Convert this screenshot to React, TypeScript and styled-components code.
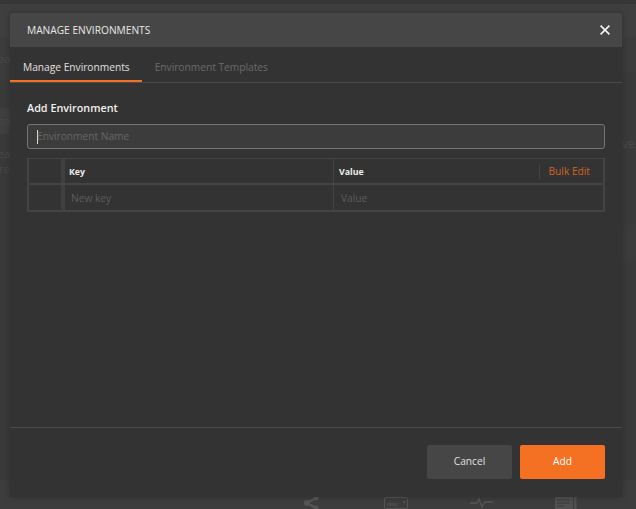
import { createGlobalStyle } from "styled-components"
import styled from "styled-components"

const GlobalStyle = createGlobalStyle`
    html, body {
        margin: 0;
        padding: 0;
        height: 100%;
        background: #3a3a3a;
    }
    * {
        box-sizing: border-box;
    }
    #root {
        height: 100%;
    }
`

const rowsLeft = [
    { lines: ["ea"], height: 44, tone: "#3c3c3c", top: 14 },
    { lines: [], height: 27, tone: "#3a3a3a", top: 0 },
    { lines: ["pa"], height: 26, tone: "#3f3f3f", top: 5 },
    { lines: ["ea", "re"], height: 50, tone: "#3a3a3a", top: 12 },
]

export default function App() {
    return <Page>
        <GlobalStyle />
        <Backdrop>
            <TopStrip />
            <SecondStrip />
            <Middle>
                <SideColumn>
                    {rowsLeft.map((row, i) => (
                        <SideRow key={i} $height={row.height} $tone={row.tone} $top={row.top}>
                            {row.lines.map(line => <div key={line}>{line}</div>)}
                        </SideRow>
                    ))}
                </SideColumn>
                <SideColumnRight>
                    <RightBand />
                    <RightText>ve</RightText>
                    <RightBandLow />
                </SideColumnRight>
            </Middle>
            <BottomBar>
                <ShareIcon />
                <KeyboardIcon />
                <PulseIcon />
                <DocIcon />
            </BottomBar>
        </Backdrop>

        <Modal>
            <ModalHeader>
                <ModalTitle>MANAGE ENVIRONMENTS</ModalTitle>
                <CloseButton aria-label="close">
                    <svg width="10" height="10" viewBox="0 0 10 10">
                        <path d="M0.6 0.6 L9.4 9.4 M9.4 0.6 L0.6 9.4" stroke="#f4f4f4" strokeWidth="1.6" fill="none" />
                    </svg>
                </CloseButton>
            </ModalHeader>

            <Tabs>
                <Tab $active>Manage Environments</Tab>
                <Tab>Environment Templates</Tab>
            </Tabs>

            <ModalBody>
                <SectionTitle>Add Environment</SectionTitle>
                <NameField>
                    <Caret />
                    <span>Environment Name</span>
                </NameField>
                <Table>
                    <HeadRow>
                        <CheckCell />
                        <Grip />
                        <KeyCell><HeadLabel>Key</HeadLabel></KeyCell>
                        <ValueCell>
                            <HeadLabel>Value</HeadLabel>
                            <BulkEdit>Bulk Edit</BulkEdit>
                        </ValueCell>
                    </HeadRow>
                    <BodyRow>
                        <CheckCell />
                        <Grip />
                        <KeyCell><Placeholder>New key</Placeholder></KeyCell>
                        <ValueCell><Placeholder>Value</Placeholder></ValueCell>
                    </BodyRow>
                </Table>
            </ModalBody>

            <ModalFooter>
                <CancelButton>Cancel</CancelButton>
                <AddButton>Add</AddButton>
            </ModalFooter>
        </Modal>
    </Page>
}

function ShareIcon() {
    return <svg width="19" height="12" viewBox="0 0 19 12">
        <path d="M13 1 L4 6 L13 11" stroke="#555555" strokeWidth="2.4" fill="none" />
        <circle cx="4" cy="6" r="3" fill="#555555" />
        <circle cx="13" cy="1" r="2.6" fill="#555555" />
        <circle cx="13" cy="11" r="2.6" fill="#555555" />
    </svg>
}

function KeyboardIcon() {
    return <svg width="24" height="12" viewBox="0 0 24 12">
        <rect x="0.5" y="0.5" width="23" height="11" rx="1.5" stroke="#555555" fill="none" />
        <path d="M4 6 V9 M6 6 V9 M8 6 V9 M10 6 V9 M12 6 V9" stroke="#555555" />
        <rect x="19" y="4" width="2" height="2" fill="#555555" />
    </svg>
}

function PulseIcon() {
    return <svg width="23" height="12" viewBox="0 0 23 12">
        <path d="M0 6 H7 L9 2 L12 10 L15 5 H23" stroke="#555555" strokeWidth="1.4" fill="none" />
    </svg>
}

function DocIcon() {
    return <svg width="22" height="12" viewBox="0 0 22 12">
        <rect x="0" y="0" width="18" height="12" fill="#505050" />
        <path d="M2 3 H15 M2 6 H15 M2 9 H9" stroke="#3a3a3a" />
        <rect x="19" y="0" width="2.5" height="12" fill="#505050" />
    </svg>
}

const Page = styled.div`
    position: relative;
    width: 636px;
    height: 509px;
    overflow: hidden;
    font-family: "Open Sans", "Noto Sans", sans-serif;
    background: #3a3a3a;
`

const Backdrop = styled.div`
    height: 100%;
    display: flex;
    flex-direction: column;
`

const TopStrip = styled.div`
    height: 4px;
    background: #363636;
`

const SecondStrip = styled.div`
    height: 33px;
    background: #3f3f3f;
`

const Middle = styled.div`
    flex: 1;
    display: flex;
    justify-content: space-between;
`

const SideColumn = styled.div`
    width: 10px;
    overflow: hidden;
`

const SideRow = styled.div<{ $height: number; $tone: string; $top: number }>`
    height: ${p => p.$height}px;
    padding-top: ${p => p.$top}px;
    background: ${p => p.$tone};
    color: #484848;
    font-size: 11px;
    line-height: 15px;
    white-space: nowrap;
    direction: rtl;
`

const SideColumnRight = styled.div`
    width: 14px;
    display: flex;
    flex-direction: column;
    color: #484848;
    font-size: 12px;
`

const RightBand = styled.div`
    height: 35px;
    background: #3c3c3c;
`

const RightText = styled.div`
    margin-top: 64px;
    height: 16px;
    line-height: 16px;
    overflow: hidden;
`

const RightBandLow = styled.div`
    margin-top: 73px;
    height: 35px;
    background: #3c3c3c;
`

const BottomBar = styled.div`
    height: 29px;
    background: #3d3d3d;
    display: flex;
    padding: 17px 0 0 303px;
    gap: 62px;
    overflow: hidden;
`

const Modal = styled.div`
    position: absolute;
    left: 10px;
    top: 13px;
    width: 612px;
    height: 484px;
    display: flex;
    flex-direction: column;
    background: #333333;
    border-radius: 2px;
    box-shadow: 0 0 6px rgba(0, 0, 0, 0.25);
`

const ModalHeader = styled.div`
    height: 34px;
    flex: none;
    display: flex;
    align-items: center;
    justify-content: space-between;
    padding: 0 12px 0 17px;
    background: #464646;
    border-radius: 2px 2px 0 0;
`

const ModalTitle = styled.div`
    color: #e8e8e8;
    font-size: 10.2px;
`

const CloseButton = styled.button`
    border: 0;
    padding: 0;
    background: none;
    display: flex;
`

const Tabs = styled.div`
    height: 36px;
    flex: none;
    display: flex;
    border-bottom: 1px solid #4a4a4a;
`

const Tab = styled.div<{ $active?: boolean }>`
    padding: 0 12px 0 13px;
    height: 35px;
    line-height: 40px;
    font-size: 10.2px;
    white-space: nowrap;
    color: ${p => p.$active ? "#e0e0e0" : "#6b6b6b"};
    border-bottom: 2px solid ${p => p.$active ? "#f47023" : "transparent"};
`

const ModalBody = styled.div`
    flex: 1;
    padding: 17px 17px 0;
`

const SectionTitle = styled.div`
    color: #f0f0f0;
    font-size: 10.8px;
    font-weight: 600;
    line-height: 16px;
`

const NameField = styled.div`
    margin-top: 8px;
    height: 25px;
    display: flex;
    align-items: center;
    padding: 0 0 2px 9px;
    background: #3c3c3c;
    border: 1px solid #757575;
    border-radius: 3px;
    color: #666666;
    font-size: 10.2px;
`

const Caret = styled.div`
    width: 1px;
    height: 14px;
    margin: 2px -1px 0 0;
    background: #dddddd;
`

const Table = styled.div`
    margin-top: 9px;
    border: 2px solid #444444;
    border-top-width: 1px;
`

const HeadRow = styled.div`
    height: 26px;
    display: flex;
    border-bottom: 2px solid #444444;
`

const BodyRow = styled.div`
    height: 25px;
    display: flex;
`

const CheckCell = styled.div`
    width: 32px;
    flex: none;
`

const Grip = styled.div`
    width: 4px;
    flex: none;
    background: #404040;
`

const KeyCell = styled.div`
    width: 269px;
    flex: none;
    display: flex;
    align-items: center;
    padding-left: 4px;
    border-right: 1px solid #444444;
`

const ValueCell = styled.div`
    flex: 1;
    display: flex;
    align-items: center;
    justify-content: space-between;
    padding-left: 5px;
`

const HeadLabel = styled.span`
    margin-top: 2px;
    color: #ececec;
    font-size: 8.8px;
    font-weight: 700;
`

const Placeholder = styled.span`
    margin-left: 2px;
    color: #5c5c5c;
    font-size: 10.2px;
`

const BulkEdit = styled.span`
    padding: 0 13px 0 9px;
    border-left: 1px solid #444444;
    color: #d2641f;
    font-size: 10.2px;
    line-height: 15px;
`

const ModalFooter = styled.div`
    height: 70px;
    flex: none;
    display: flex;
    justify-content: flex-end;
    gap: 8px;
    padding: 17px 17px 0 0;
    border-top: 1px solid #4a4a4a;
`

const CancelButton = styled.button`
    width: 85px;
    height: 34px;
    border: 0;
    border-radius: 2px;
    padding: 0 0 3px;
    background: #464646;
    color: #e0e0e0;
    font-family: inherit;
    font-size: 10.2px;
`

const AddButton = styled(CancelButton)`
    background: #f47023;
    color: #ffffff;
`
